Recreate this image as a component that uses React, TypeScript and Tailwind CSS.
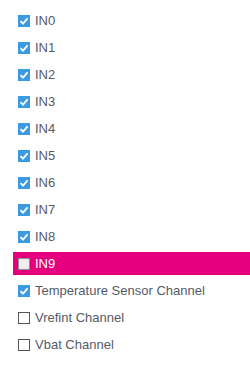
import React from "react";

type Item = { label: string; checked: boolean; active?: boolean };

const items: Item[] = [
  { label: "IN0", checked: true },
  { label: "IN1", checked: true },
  { label: "IN2", checked: true },
  { label: "IN3", checked: true },
  { label: "IN4", checked: true },
  { label: "IN5", checked: true },
  { label: "IN6", checked: true },
  { label: "IN7", checked: true },
  { label: "IN8", checked: true },
  { label: "IN9", checked: false, active: true },
  { label: "Temperature Sensor Channel", checked: true },
  { label: "Vrefint Channel", checked: false },
  { label: "Vbat Channel", checked: false },
];

function Box({ checked, active }: { checked: boolean; active?: boolean }) {
  if (checked) {
    return (
      <span className="w-[12px] h-[12px] bg-[#3c9be0] flex items-center justify-center shrink-0">
        <svg width="10" height="10" viewBox="0 0 10 10">
          <path d="M1.5 5.2 L4 7.6 L8.6 2.4" stroke="#fff" strokeWidth="1.8" fill="none" />
        </svg>
      </span>
    );
  }
  return (
    <span
      className={
        active
          ? "w-[12px] h-[12px] bg-[#eeeeee] border border-[#8a8a8a] shrink-0"
          : "w-[12px] h-[12px] bg-white border border-[#555555] shrink-0"
      }
    />
  );
}

export default function App() {
  return (
    <div className="w-[250px] h-[374px] bg-white pt-[9px] flex flex-col gap-[4px] font-['Liberation_Sans',Arial,sans-serif]">
      {items.map((it) => (
        <div
          key={it.label}
          className={
            it.active
              ? "ml-[13px] h-[23px] pl-[5px] flex items-center gap-[5px] bg-[#e6007e] text-white text-[13px]"
              : "ml-[13px] h-[23px] pl-[5px] flex items-center gap-[5px] text-[#555a66] text-[13px]"
          }
        >
          <Box checked={it.checked} active={it.active} />
          <span className="leading-none">{it.label}</span>
        </div>
      ))}
    </div>
  );
}
